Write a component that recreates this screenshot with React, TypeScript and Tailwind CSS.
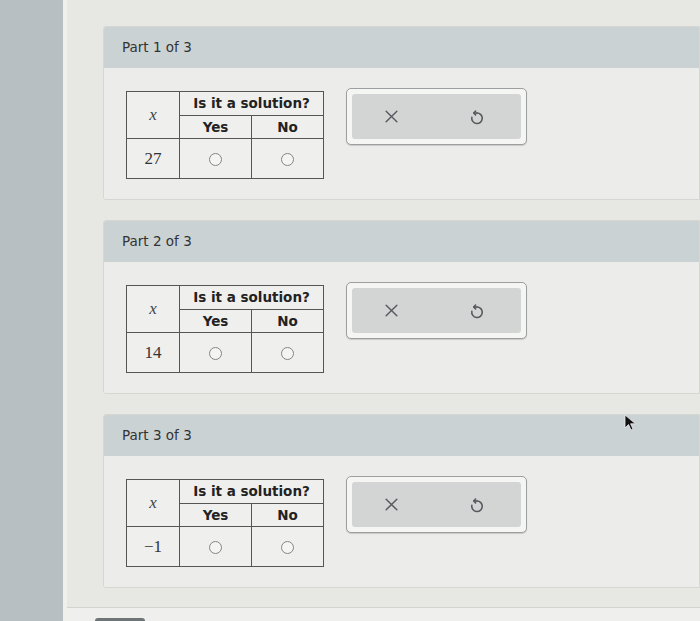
import React from "react";

type Part = { n: number; x: string };

const parts: Part[] = [
  { n: 1, x: "27" },
  { n: 2, x: "14" },
  { n: 3, x: "\u22121" },
];

function Radio() {
  return <span className="inline-block w-[13px] h-[13px] rounded-full border border-[#858585] bg-[#f4f4f2]" />;
}

function UndoIcon() {
  return (
    <svg width="20" height="20" viewBox="0 0 24 24" fill="none" stroke="#555a5d" strokeWidth="1.9" strokeLinecap="round" strokeLinejoin="round">
      <path d="M12 7.2A6.3 6.3 0 1 1 5.8 12.4" />
      <path d="M12 7.2H8.2" />
      <path d="M10.3 5 L8.1 7.2 L10.3 9.4" />
    </svg>
  );
}

function XIcon() {
  return (
    <svg width="15" height="15" viewBox="0 0 14 14" fill="none" stroke="#55595c" strokeWidth="1.3" strokeLinecap="round">
      <path d="M2 2 L12 12 M12 2 L2 12" />
    </svg>
  );
}

function SolutionTable({ x }: { x: string }) {
  const cell = "border-[1.5px] border-[#555]";
  const head = "text-center font-bold text-[13.5px] font-['DejaVu_Sans',sans-serif]";
  return (
    <table className="mt-[3px] border-collapse bg-[#efefed] text-[#222]">
      <tbody>
        <tr className="h-[24px]">
          <td rowSpan={2} className={`${cell} w-[53px] text-center italic text-[17px] text-[#444] font-['Liberation_Serif',serif]`}>
            x
          </td>
          <td colSpan={2} className={`${cell} ${head}`}>
            Is it a solution?
          </td>
        </tr>
        <tr className="h-[23px]">
          <td className={`${cell} ${head} w-[72px]`}>Yes</td>
          <td className={`${cell} ${head} w-[72px]`}>No</td>
        </tr>
        <tr className="h-[40px]">
          <td className={`${cell} text-center text-[17px] text-[#333] font-['Liberation_Serif',serif]`}>{x}</td>
          <td className={`${cell} text-center`}>
            <div className="flex justify-center pt-[2px]"><Radio /></div>
          </td>
          <td className={`${cell} text-center`}>
            <div className="flex justify-center pt-[2px]"><Radio /></div>
          </td>
        </tr>
      </tbody>
    </table>
  );
}

function Card({ part }: { part: Part }) {
  return (
    <section className="border border-[#d6d6d3] rounded-l-[3px] overflow-hidden">
      <div className="h-[41px] bg-[#cad2d4] pl-[18px] flex items-center text-[13.5px] text-[#333] font-['DejaVu_Sans',sans-serif]">
        Part {part.n} of 3
      </div>
      <div className="h-[131px] bg-[#ececea] pl-[22px] pt-[20px] flex items-start gap-[22px]">
        <SolutionTable x={part.x} />
        <div className="w-[181px] h-[57px] rounded-[5px] border border-[#9c9e9f] bg-[#f5f5f3] p-[5px] shadow-[0_1px_1px_rgba(0,0,0,0.15)]">
          <div className="h-full rounded-[3px] bg-[#d3d5d5] flex items-center justify-between pl-[32px] pr-[34px]">
            <XIcon />
            <UndoIcon />
          </div>
        </div>
      </div>
    </section>
  );
}

export default function App() {
  return (
    <div className="relative w-[700px] h-[621px] overflow-hidden flex bg-[#e7e7e4]">
      <div className="w-[63px] shrink-0 bg-[#b8bfc3]" />
      <div className="w-[4px] shrink-0 bg-[#efefec]" />
      <div className="flex-1 flex flex-col">
        <div className="flex-1 pl-[36px] pt-[26px] flex flex-col gap-[20px]">
          {parts.map((p) => (
            <Card key={p.n} part={p} />
          ))}
        </div>
        <div className="h-[14px] border-t border-[#d2d2cf] bg-[#efefed] pl-[28px]">
          <div className="mt-[10px] w-[50px] h-[4px] rounded-t-[3px] bg-[#6f7477]" />
        </div>
      </div>
      <svg className="absolute left-[624px] top-[414px]" width="14" height="18" viewBox="0 0 14 18">
        <path d="M1 1 L1 14 L4.5 10.5 L7 16 L9 15 L6.6 9.8 L11.5 9.8 Z" fill="#111" stroke="#eee" strokeWidth="0.8" />
      </svg>
    </div>
  );
}
